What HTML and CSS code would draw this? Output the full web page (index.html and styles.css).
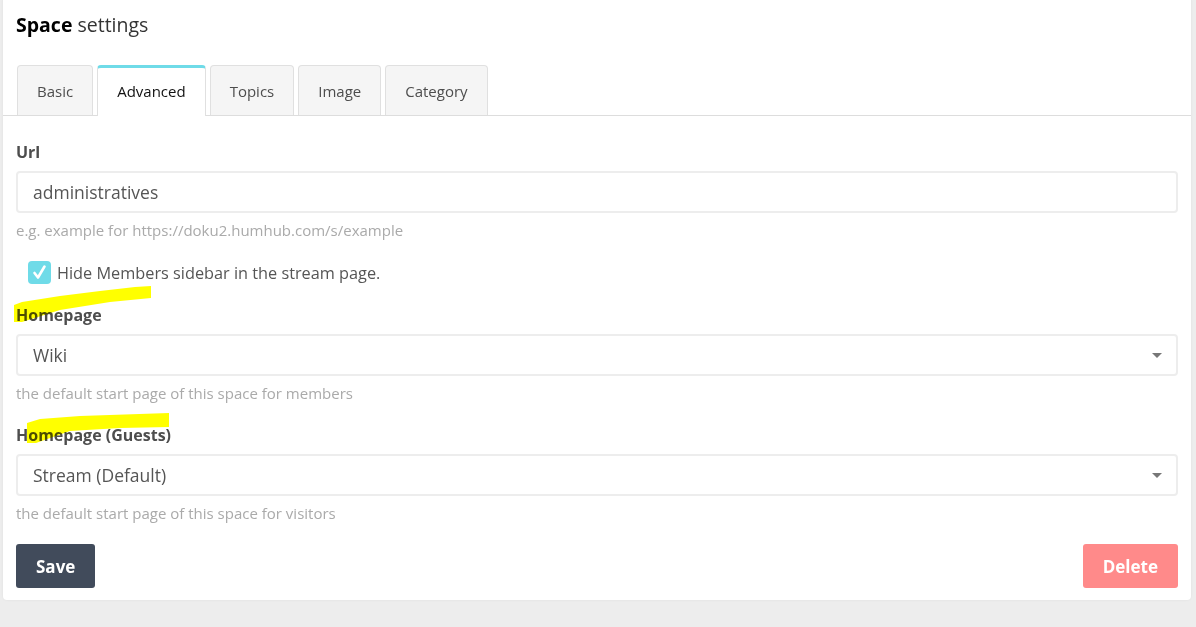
FILE: index.html
```html
<!DOCTYPE html>
<html lang="en">
<head>
<meta charset="utf-8">
<title>Space settings</title>
<link rel="stylesheet" href="styles.css">
</head>
<body>
<div class="panel">
  <div class="panel-heading"><strong>Space</strong> settings</div>
  <div class="tabs">
    <div class="tab">Basic</div>
    <div class="tab active">Advanced</div>
    <div class="tab">Topics</div>
    <div class="tab">Image</div>
    <div class="tab">Category</div>
  </div>
  <form class="form">
    <label class="label">Url</label>
    <div class="control">administratives</div>
    <div class="help">e.g. example for https://doku2.humhub.com/s/example</div>

    <div class="check-row">
      <span class="checkbox"><svg viewBox="0 0 23 23" width="23" height="23"><polyline points="6.5,12 10,16.5 16.5,5.5" fill="none" stroke="#fff" stroke-width="2.6" stroke-linecap="round" stroke-linejoin="round"/></svg></span>
      <span class="check-text">Hide Members sidebar in the stream page.</span>
    </div>

    <label class="label label-first">Homepage</label>
    <div class="control select"><span>Wiki</span><span class="caret"></span></div>
    <div class="help">the default start page of this space for members</div>

    <label class="label label-second">Homepage (Guests)</label>
    <div class="control select"><span>Stream (Default)</span><span class="caret"></span></div>
    <div class="help">the default start page of this space for visitors</div>

    <div class="actions">
      <button type="button" class="btn btn-save">Save</button>
      <button type="button" class="btn btn-delete">Delete</button>
    </div>
  </form>
</div>
<svg class="marker" width="1196" height="627" viewBox="0 0 1196 627">
  <polygon fill="#ffff00" points="14,305 22,302 60,296 100,291 135,287 151,286 151,298 110,302 60,310 22,322 14,322"/>
  <polygon fill="#ffff00" points="27,423 40,419 80,416 169,413 169,427 120,428 70,431 36,443 27,443"/>
</svg>
</body>
</html>
```

FILE: styles.css
```css
html, body {
  margin: 0;
  padding: 0;
}
body {
  background: #ededed;
  font-family: "Open Sans", "Liberation Sans", sans-serif;
  color: #555;
  position: relative;
  height: 627px;
  overflow: hidden;
}
.panel {
  margin: -4px 5px 0 3px;
  background: #fff;
  border-radius: 4px;
  box-shadow: 0 0 3px rgba(0,0,0,0.06);
}
.panel-heading {
  padding: 17px 13px 0;
  font-size: 19.5px;
  line-height: 24px;
  color: #333;
}
.panel-heading strong {
  color: #000;
  font-weight: 700;
}
.tabs {
  display: flex;
  align-items: flex-end;
  gap: 4px;
  margin-top: 28px;
  padding-left: 14px;
  border-bottom: 1px solid #ddd;
}
.tab {
  box-sizing: border-box;
  height: 50px;
  padding: 0 19px;
  display: flex;
  align-items: center;
  background: #f5f5f5;
  border: 1px solid #e0e0e0;
  border-bottom: none;
  border-radius: 4px 4px 0 0;
  font-size: 15px;
  color: #4d4d4d;
}
.tab.active {
  height: 51px;
  margin-bottom: -1px;
  background: #fff;
  border-top: 3px solid #6fdbe8;
  padding-bottom: 2px;
  color: #111;
}
.form {
  padding: 25px 13px 12px 13px;
  display: flex;
  flex-direction: column;
}
.label {
  font-size: 16px;
  line-height: 22px;
  font-weight: 700;
  color: #4d4d4d;
}
.label-first { margin-top: 20px; }
.label-second { margin-top: 21px; }
.control {
  box-sizing: border-box;
  height: 42px;
  margin-top: 8px;
  border: 2px solid #ededed;
  border-radius: 4px;
  padding: 0 15px;
  display: flex;
  align-items: center;
  font-size: 17.5px;
  color: #555;
}
.select {
  justify-content: space-between;
}
.caret {
  width: 0;
  height: 0;
  border-left: 5px solid transparent;
  border-right: 5px solid transparent;
  border-top: 5px solid #777;
  margin-right: -1px;
}
.help {
  margin-top: 7px;
  font-size: 15px;
  line-height: 20px;
  color: #aaa;
}
.check-row {
  display: flex;
  align-items: center;
  gap: 6px;
  margin-top: 21px;
  padding-left: 12px;
}
.checkbox {
  width: 23px;
  height: 23px;
  border-radius: 4px;
  background: #6fdbe8;
  display: flex;
}
.check-text {
  font-size: 16.3px;
  color: #555;
}
.actions {
  display: flex;
  justify-content: space-between;
  margin-top: 21px;
}
.btn {
  height: 44px;
  border: none;
  border-radius: 3px;
  padding: 0 20px;
  font-family: "Open Sans", "Liberation Sans", sans-serif;
  font-size: 17px;
  font-weight: 700;
  color: #fff;
}
.btn-save {
  background: #414b5b;
}
.btn-delete {
  background: #ff8a8a;
}
.marker {
  position: absolute;
  left: 0;
  top: 0;
  pointer-events: none;
  mix-blend-mode: multiply;
}
```
